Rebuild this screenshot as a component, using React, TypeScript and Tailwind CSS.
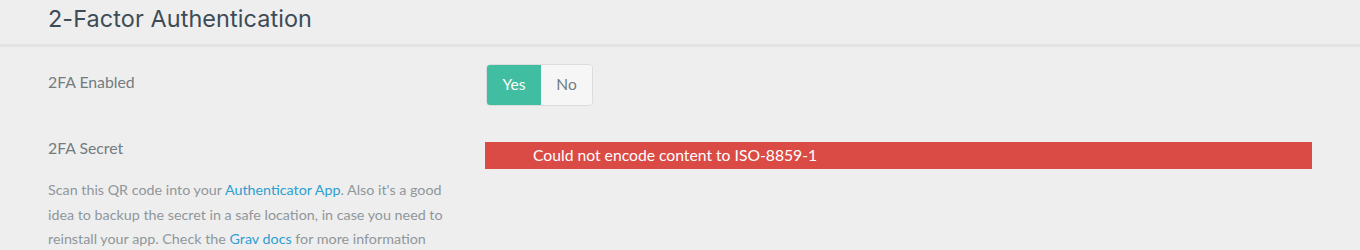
export default function App() {
  return (
    <div className="min-h-[250px] bg-[#eeeeee] font-['Lato','Liberation_Sans',sans-serif] overflow-hidden">
      <div className="border-b-[3px] border-[#e3e3e3] px-12 pt-[3px] pb-[9px]">
        <h1 className="font-['Inter','DejaVu_Sans',sans-serif] text-[23.4px] leading-[32px] text-[#3d4b57] tracking-[0.1px]">
          2-Factor Authentication
        </h1>
      </div>

      <div className="flex px-12 pt-[17px]">
        <div className="w-[438px] shrink-0 pt-[8px] text-[15.8px] leading-[20px] text-[#737c81]">
          2FA Enabled
        </div>
        <div className="flex h-[42px] rounded-[4px] border border-[#dcdcdc] overflow-hidden text-[15.5px]">
          <button className="w-[54px] bg-[#41bea1] text-white">Yes</button>
          <button className="w-[51px] bg-[#f6f6f6] text-[#737c81]">No</button>
        </div>
      </div>

      <div className="flex px-12 pt-[32px]">
        <div className="w-[406px] shrink-0">
          <div className="text-[15.8px] leading-[20px] text-[#737c81]">2FA Secret</div>
          <p className="mt-[20px] text-[14.3px] leading-[24.5px] text-[#8f979b]">
            Scan this QR code into your{" "}
            <a className="text-[#2f9ed0]">Authenticator App</a>. Also it's a good idea
            to backup the secret in a safe location, in case you need to reinstall
            your app. Check the <a className="text-[#2f9ed0]">Grav docs</a> for more
            information
          </p>
        </div>
        <div className="ml-[31px] mt-[4px] w-[827px] h-[27px] bg-[#db4b46] pl-[48px] text-white text-[15.7px] leading-[27px]">
          Could not encode content to ISO-8859-1
        </div>
      </div>
    </div>
  );
}
